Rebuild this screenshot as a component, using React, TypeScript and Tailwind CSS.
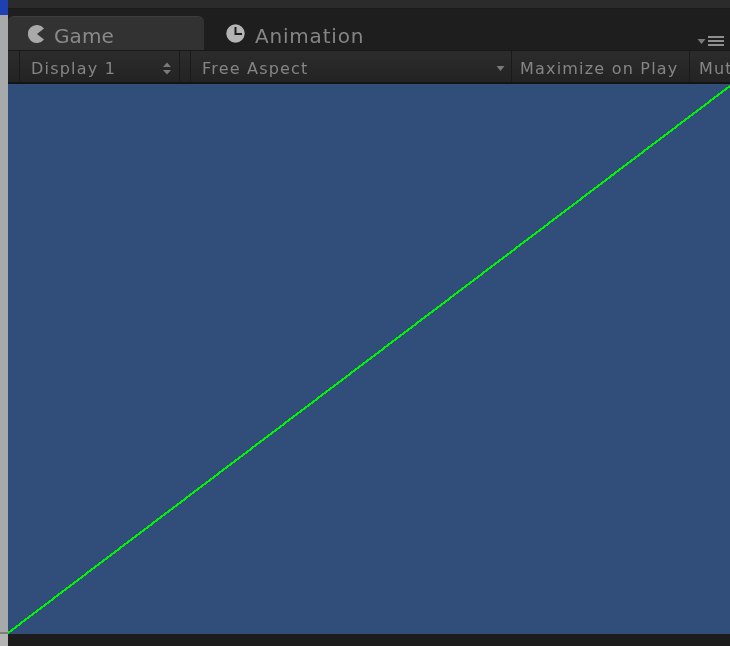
function GameIcon() {
  return (
    <svg width="18" height="18" viewBox="0 0 18 18" className="shrink-0 blur-[0.4px]">
      <path d="M16 3.5 A9 9 0 1 0 16 14.5 L9 9 Z" fill="#a9a9a9" />
    </svg>
  );
}

function ClockIcon() {
  return (
    <svg width="19" height="19" viewBox="0 0 19 19" className="shrink-0 blur-[0.3px]">
      <circle cx="9.5" cy="9.5" r="9.2" fill="#b4b4b4" />
      <path d="M9.5 3 V10 H16" fill="none" stroke="#1c1c1c" strokeWidth="2" />
    </svg>
  );
}

function Sep() {
  return <div className="w-px self-stretch bg-[#1a1a1a] shrink-0" />;
}

function ToolbarLabel({ children }: { children: string }) {
  return <span className="text-[16px] leading-none tracking-[1.2px] text-[#858585] whitespace-nowrap blur-[0.4px]">{children}</span>;
}

function SpinnerArrows() {
  return (
    <svg width="10" height="13" viewBox="0 0 10 13" className="shrink-0 blur-[0.3px]">
      <path d="M5 0.5 L9 5 H1 Z M5 12.5 L9 8 H1 Z" fill="#7a7a7a" />
    </svg>
  );
}

function DropArrow() {
  return (
    <svg width="9" height="5" viewBox="0 0 9 5" className="shrink-0 blur-[0.3px]">
      <path d="M0.5 0 H8.5 L4.5 5 Z" fill="#7a7a7a" />
    </svg>
  );
}

export default function App() {
  return (
    <div className="flex h-[646px] w-[730px] overflow-hidden bg-[#1d1d1d] font-['DejaVu_Sans',sans-serif]">
      {/* strip of the window behind */}
      <div className="flex w-2 shrink-0 flex-col bg-[#a8a9ab]">
        <div className="h-[15px] bg-[#1f40b0]" />
        <div className="h-[617px]" />
        <div className="h-[2px] bg-[#7d7d7d]" />
        <div className="flex-1 bg-[#b4b4b4]" />
      </div>

      <div className="flex min-w-0 flex-1 flex-col">
        <div className="h-[9px] shrink-0 bg-[#2b2b2b] border-b border-[#1a1a1a]" />

        {/* tabs */}
        <div className="relative flex h-[41px] shrink-0 items-end bg-[#1e1e1e]">
          <div className="flex h-[34px] w-[196px] items-center gap-2 rounded-t-[6px] border-t border-[#3d3d3d] bg-[#323232] pl-5">
            <GameIcon />
            <span className="mt-1 text-[20px] leading-none tracking-[0.1px] text-[#8a8a8a] blur-[0.4px]">Game</span>
          </div>
          <div className="flex h-[34px] items-center gap-[10px] pl-[22px]">
            <ClockIcon />
            <span className="mt-[6px] text-[20px] leading-none tracking-[0.8px] text-[#858585] blur-[0.4px]">Animation</span>
          </div>
          <div className="ml-auto flex items-center gap-[2px] pb-[4px] pr-[6px]">
            <DropArrow />
            <div className="flex w-4 flex-col gap-[2px]">
              <div className="h-[2px] bg-[#8f8f8f]" />
              <div className="h-[2px] bg-[#8f8f8f]" />
              <div className="h-[2px] bg-[#8f8f8f]" />
            </div>
          </div>
        </div>

        {/* toolbar */}
        <div className="flex h-[34px] shrink-0 items-stretch border-t border-[#181818] border-b-[2px] border-b-[#141414] bg-gradient-to-b from-[#2c2c2c] to-[#232323]">
          <div className="w-[11px] shrink-0" />
          <Sep />
          <div className="flex w-[159px] shrink-0 items-center justify-between pl-[11px] pr-[7px] pt-1">
            <ToolbarLabel>Display 1</ToolbarLabel>
            <SpinnerArrows />
          </div>
          <Sep />
          <div className="w-[10px] shrink-0" />
          <Sep />
          <div className="flex w-[320px] shrink-0 items-center justify-between pl-[11px] pr-[6px] pt-1">
            <ToolbarLabel>Free Aspect</ToolbarLabel>
            <DropArrow />
          </div>
          <Sep />
          <div className="flex w-[177px] shrink-0 items-center pl-[8px] pt-1">
            <ToolbarLabel>Maximize on Play</ToolbarLabel>
          </div>
          <Sep />
          <div className="flex min-w-0 flex-1 items-center overflow-hidden pl-[9px] pt-1">
            <ToolbarLabel>Mute Audio</ToolbarLabel>
          </div>
        </div>

        {/* game view */}
        <div className="flex-1 bg-[#314d79]">
          <svg width="722" height="550" viewBox="0 0 722 550" className="block" shapeRendering="crispEdges">
            <line x1="0" y1="549" x2="722" y2="2" stroke="#00f500" strokeWidth="2" />
          </svg>
        </div>

        <div className="h-3 shrink-0 bg-[#1c1c1c]" />
      </div>
    </div>
  );
}
